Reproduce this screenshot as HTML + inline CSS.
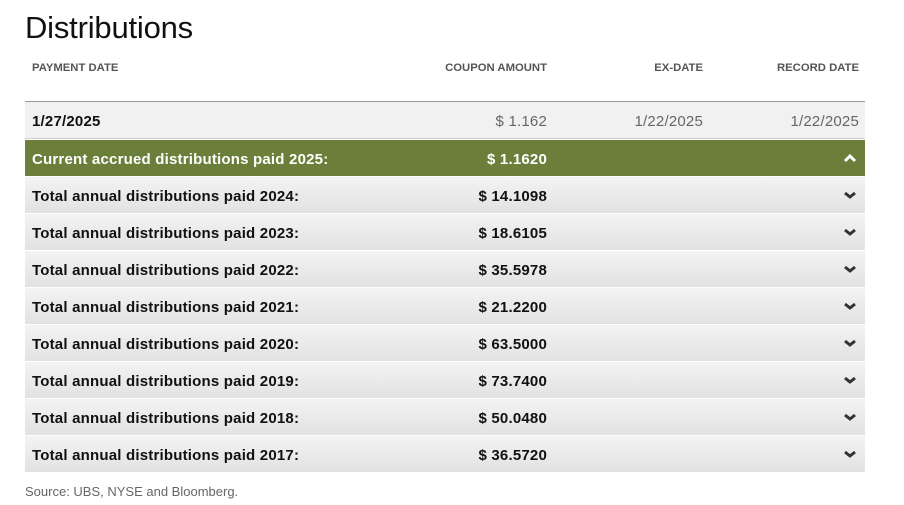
<!DOCTYPE html>
<html><head><style>
body{margin:0;background:#fff;font-family:"Liberation Sans",sans-serif;width:904px;height:505px;overflow:hidden;position:relative}
h1{position:absolute;left:25px;top:10px;margin:0;font-weight:normal;font-size:31px;color:#111;letter-spacing:-0.2px}
.hd{position:absolute;top:62px;font-size:11.3px;font-weight:bold;color:#555}
.row{position:absolute;left:25px;width:840px;height:36px;font-size:15px;letter-spacing:0.2px}
.row span{position:absolute;top:11px}
.tot{background:linear-gradient(#f3f3f3,#e2e2e2);font-weight:bold;color:#111}
.g{background:#6b7f3a;color:#fff;font-weight:bold}
.ch{position:absolute;left:818px;top:13px;width:14px;height:10px}
</style></head><body>
<h1>Distributions</h1>
<div class="hd" style="left:32px">PAYMENT DATE</div>
<div class="hd" style="right:357px">COUPON AMOUNT</div>
<div class="hd" style="right:201px">EX-DATE</div>
<div class="hd" style="right:45px">RECORD DATE</div>
<div style="position:absolute;left:25px;top:101px;width:840px;height:1px;background:#999"></div>
<div class="row" style="top:102px;height:37px;background:#f1f1f1;border-bottom:1px solid #ccc;box-sizing:border-box">
<span style="left:7px;font-weight:bold;color:#111">1/27/2025</span>
<span style="right:318px;color:#666">$ 1.162</span>
<span style="right:162px;color:#666">1/22/2025</span>
<span style="right:6px;color:#666">1/22/2025</span></div>
<div class="row g" style="top:140px"><span style="left:7px">Current accrued distributions paid 2025:</span><span style="right:318px">$ 1.1620</span>
<svg class="ch" viewBox="0 0 14 10"><path d="M2 8L7 3L12 8" stroke="#fff" stroke-width="3" fill="none"/></svg></div>
<div class="row tot" style="top:177px"><span style="left:7px">Total annual distributions paid 2024:</span><span style="right:318px">$ 14.1098</span><svg class="ch" viewBox="0 0 14 10"><path d="M2 3L7 7L12 3" stroke="#333" stroke-width="3" fill="none"/></svg></div>
<div class="row tot" style="top:214px"><span style="left:7px">Total annual distributions paid 2023:</span><span style="right:318px">$ 18.6105</span><svg class="ch" viewBox="0 0 14 10"><path d="M2 3L7 7L12 3" stroke="#333" stroke-width="3" fill="none"/></svg></div>
<div class="row tot" style="top:251px"><span style="left:7px">Total annual distributions paid 2022:</span><span style="right:318px">$ 35.5978</span><svg class="ch" viewBox="0 0 14 10"><path d="M2 3L7 7L12 3" stroke="#333" stroke-width="3" fill="none"/></svg></div>
<div class="row tot" style="top:288px"><span style="left:7px">Total annual distributions paid 2021:</span><span style="right:318px">$ 21.2200</span><svg class="ch" viewBox="0 0 14 10"><path d="M2 3L7 7L12 3" stroke="#333" stroke-width="3" fill="none"/></svg></div>
<div class="row tot" style="top:325px"><span style="left:7px">Total annual distributions paid 2020:</span><span style="right:318px">$ 63.5000</span><svg class="ch" viewBox="0 0 14 10"><path d="M2 3L7 7L12 3" stroke="#333" stroke-width="3" fill="none"/></svg></div>
<div class="row tot" style="top:362px"><span style="left:7px">Total annual distributions paid 2019:</span><span style="right:318px">$ 73.7400</span><svg class="ch" viewBox="0 0 14 10"><path d="M2 3L7 7L12 3" stroke="#333" stroke-width="3" fill="none"/></svg></div>
<div class="row tot" style="top:399px"><span style="left:7px">Total annual distributions paid 2018:</span><span style="right:318px">$ 50.0480</span><svg class="ch" viewBox="0 0 14 10"><path d="M2 3L7 7L12 3" stroke="#333" stroke-width="3" fill="none"/></svg></div>
<div class="row tot" style="top:436px"><span style="left:7px">Total annual distributions paid 2017:</span><span style="right:318px">$ 36.5720</span><svg class="ch" viewBox="0 0 14 10"><path d="M2 3L7 7L12 3" stroke="#333" stroke-width="3" fill="none"/></svg></div>
<div style="position:absolute;left:25px;top:484px;font-size:13px;color:#666">Source: UBS, NYSE and Bloomberg.</div>
</body></html>
